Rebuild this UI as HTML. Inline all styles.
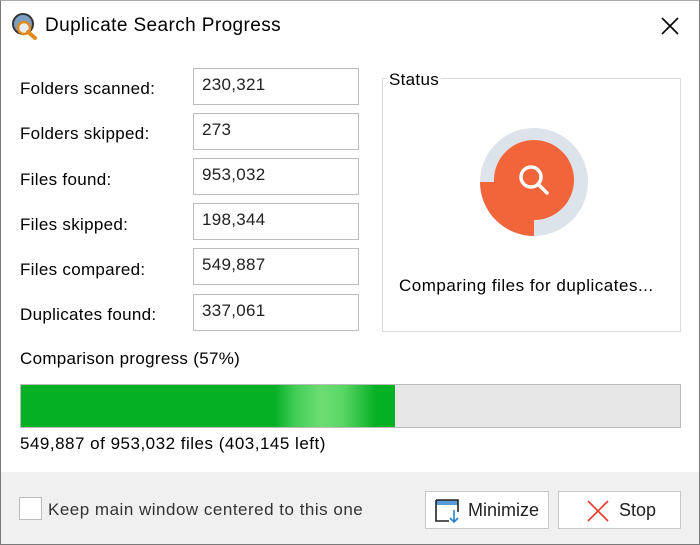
<!DOCTYPE html>
<html><head><meta charset="utf-8"><style>
*{margin:0;padding:0;box-sizing:border-box}
body{width:700px;height:545px;background:#fff;font-family:"Liberation Sans",sans-serif;color:#000;position:relative;overflow:hidden}
.win{position:absolute;left:0;top:0;width:700px;height:545px;border:1px solid #7a7a7a;border-top:1px solid #aaa}
.abs{position:absolute}
.t{font-size:17px;letter-spacing:0.3px}
.lbl{position:absolute;left:20px;font-size:17px;letter-spacing:0.3px}
.box{position:absolute;left:193px;width:166px;height:37px;border:1px solid #bcbcbc;font-size:17px;letter-spacing:0.3px;padding:6px 0 0 8px;color:#222}
.footer{position:absolute;left:1px;right:1px;top:472px;bottom:1px;background:#f0f0f0}
.btn{position:absolute;top:491px;height:38px;background:#fff;border:1px solid #c8c8c8;font-size:18px;color:#222}
</style></head><body>
<div class="win"></div>
<svg class="abs" style="left:11px;top:12px" width="28" height="28" viewBox="0 0 28 28">
<circle cx="12" cy="12" r="10" fill="#7aa0c4" stroke="#333" stroke-width="2"/>
<circle cx="13" cy="16" r="6" fill="#e8eef4" stroke="#e08a1e" stroke-width="2.5"/>
<line x1="17" y1="20" x2="24" y2="26" stroke="#e08a1e" stroke-width="4" stroke-linecap="round"/>
</svg>
<div class="abs" style="left:45px;top:15px;font-size:19px;letter-spacing:0.4px;color:#000">Duplicate Search Progress</div>
<svg class="abs" style="left:660px;top:16px" width="20" height="20" viewBox="0 0 20 20"><path d="M2 2L18 18M18 2L2 18" stroke="#000" stroke-width="1.6"/></svg>

<div class="lbl" style="top:79px">Folders scanned:</div>
<div class="lbl" style="top:124px">Folders skipped:</div>
<div class="lbl" style="top:170px">Files found:</div>
<div class="lbl" style="top:215px">Files skipped:</div>
<div class="lbl" style="top:260px">Files compared:</div>
<div class="lbl" style="top:305px">Duplicates found:</div>
<div class="box" style="top:68px">230,321</div>
<div class="box" style="top:113px">273</div>
<div class="box" style="top:158px">953,032</div>
<div class="box" style="top:203px">198,344</div>
<div class="box" style="top:248px">549,887</div>
<div class="box" style="top:294px">337,061</div>

<div class="abs" style="left:382px;top:78px;width:299px;height:254px;border:1px solid #dcdcdc"></div>
<div class="abs t" style="left:387px;top:70px;background:#fff;padding:0 2px">Status</div>
<svg class="abs" style="left:478px;top:126px" width="112" height="112" viewBox="0 0 112 112">
<circle cx="56" cy="56" r="54" fill="#dde3ea"/>
<path d="M56 56 L2 56 A54 54 0 0 0 56 110 Z" fill="#f2643a"/>
<circle cx="56" cy="54" r="40" fill="#f2643a"/>
<circle cx="53" cy="51" r="10" fill="none" stroke="#fff" stroke-width="3.5"/>
<line x1="60" y1="58" x2="69" y2="67" stroke="#fff" stroke-width="3.5" stroke-linecap="round"/>
</svg>
<div class="abs t" style="left:399px;top:276px;letter-spacing:0.5px">Comparing files for duplicates...</div>

<div class="lbl" style="top:349px">Comparison progress (57%)</div>
<div class="abs" style="left:20px;top:384px;width:661px;height:44px;background:#e6e6e6;border:1px solid #bcbcbc"></div>
<div class="abs" style="left:21px;top:385px;width:374px;height:42px;background:linear-gradient(90deg,#06b025 0,#06b025 68%,#3fcc55 73%,#6ddd74 80%,#5ad665 86%,#06b025 95%)"></div>
<div class="lbl" style="top:434px;letter-spacing:0.5px">549,887 of 953,032 files (403,145 left)</div>

<div class="footer"></div>
<div class="abs" style="left:19px;top:497px;width:23px;height:23px;background:#fff;border:1px solid #bcbcbc"></div>
<div class="abs t" style="left:48px;top:500px;color:#333;letter-spacing:0.5px">Keep main window centered to this one</div>
<div class="btn" style="left:425px;width:124px">
<svg class="abs" style="left:9px;top:6px" width="26" height="26" viewBox="0 0 26 26">
<rect x="1" y="2" width="22" height="5" fill="#5b9bd5"/>
<path d="M1 2H23V14M1 2V23H14" fill="none" stroke="#222" stroke-width="1.6"/>
<path d="M19 12V24M15 20L19 24L23 20" fill="none" stroke="#2a7fd0" stroke-width="1.6"/>
</svg>
<span class="abs" style="left:42px;top:8px">Minimize</span></div>
<div class="btn" style="left:558px;width:123px">
<svg class="abs" style="left:28px;top:8px" width="22" height="22" viewBox="0 0 22 22"><path d="M1 1L21 21M21 1L1 21" stroke="#e8382a" stroke-width="1.6"/></svg>
<span class="abs" style="left:60px;top:8px">Stop</span></div>
</body></html>
